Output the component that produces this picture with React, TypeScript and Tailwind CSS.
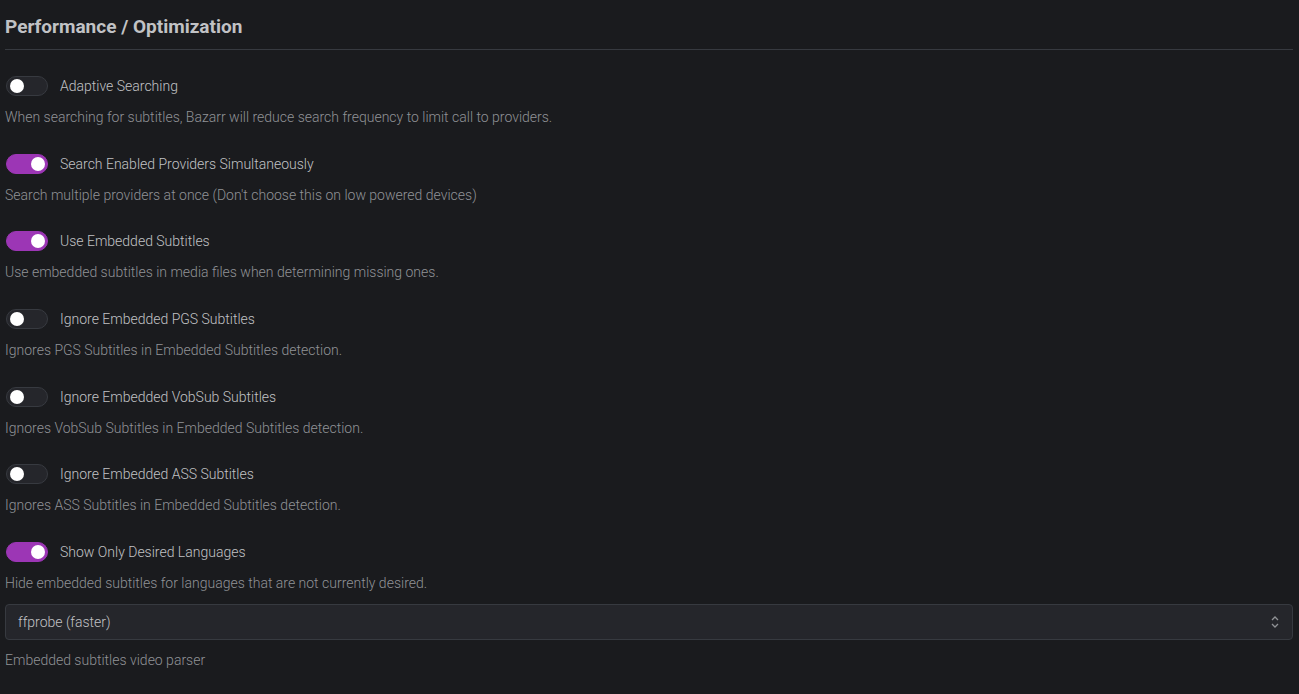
import React, { useState } from "react";

type Item = { label: string; desc: string; on: boolean };

const items: Item[] = [
  { label: "Adaptive Searching", desc: "When searching for subtitles, Bazarr will reduce search frequency to limit call to providers.", on: false },
  { label: "Search Enabled Providers Simultaneously", desc: "Search multiple providers at once (Don't choose this on low powered devices)", on: true },
  { label: "Use Embedded Subtitles", desc: "Use embedded subtitles in media files when determining missing ones.", on: true },
  { label: "Ignore Embedded PGS Subtitles", desc: "Ignores PGS Subtitles in Embedded Subtitles detection.", on: false },
  { label: "Ignore Embedded VobSub Subtitles", desc: "Ignores VobSub Subtitles in Embedded Subtitles detection.", on: false },
  { label: "Ignore Embedded ASS Subtitles", desc: "Ignores ASS Subtitles in Embedded Subtitles detection.", on: false },
  { label: "Show Only Desired Languages", desc: "Hide embedded subtitles for languages that are not currently desired.", on: true },
];

function Toggle({ on, onClick }: { on: boolean; onClick: () => void }) {
  return (
    <button
      onClick={onClick}
      className={`relative ml-[1px] h-5 w-[42px] shrink-0 rounded-full border ${
        on ? "bg-[#9c36b5] border-[#9c36b5]" : "bg-[#25262b] border-[#373a40]"
      }`}
    >
      <span
        className={`absolute top-[2px] h-[14px] w-[14px] rounded-full bg-white ${on ? "left-[24px]" : "left-[3px]"}`}
      />
    </button>
  );
}

export default function App() {
  const [state, setState] = useState(items.map((i) => i.on));

  return (
    <div className="min-h-screen bg-[#1a1b1e] px-[5px] pt-[13px] font-['Roboto',sans-serif] text-[#c1c2c5]">
      {/* Section header */}
      <h2 className="text-[19px] font-bold leading-7 text-[#c1c2c5]">Performance / Optimization</h2>
      <div className="mt-[8px] mr-[1px] border-t border-[#373a40]" />

      <div className="mt-[26px]">
        {items.map((item, i) => (
          <div key={item.label} className="mb-[26.67px]">
            <div className="flex h-5 items-center gap-3">
              <Toggle
                on={state[i]}
                onClick={() => setState((s) => s.map((v, j) => (j === i ? !v : v)))}
              />
              <span className="text-sm font-light text-[#c1c2c5]">{item.label}</span>
            </div>
            <p className="mt-[11px] text-sm font-light leading-5 text-[#909296]">{item.desc}</p>
          </div>
        ))}
      </div>

      {/* Parser select */}
      <div className="-mt-[15.67px] mr-[1px] flex h-9 items-center justify-between rounded border border-[#373a40] bg-[#25262b] pl-3 pr-3">
        <span className="text-sm font-light text-[#c1c2c5]">ffprobe (faster)</span>
        <svg width="10" height="14" viewBox="0 0 10 14" fill="none" stroke="#909296" strokeWidth="1.3">
          <path d="M2 5 L5 2 L8 5" />
          <path d="M2 9 L5 12 L8 9" />
        </svg>
      </div>
      <p className="mt-[10px] text-sm font-light leading-5 text-[#909296]">Embedded subtitles video parser</p>
    </div>
  );
}
